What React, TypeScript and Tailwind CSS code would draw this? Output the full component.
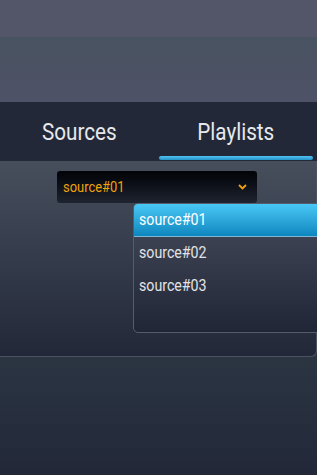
import React from "react";

const items = ["source#01", "source#02", "source#03"];

function Condensed({ children, left }: { children: React.ReactNode; left?: boolean }) {
  // Roboto Condensed isn't installed, so squeeze Roboto a little
  return (
    <span className={left ? "inline-block origin-left scale-x-[0.86]" : "inline-block scale-x-[0.86]"}>
      {children}
    </span>
  );
}

export default function App() {
  return (
    <div className="w-[317px] h-[475px] overflow-hidden flex flex-col bg-[#2b3542] font-['Roboto',sans-serif]">
      {/* Top header */}
      <div className="h-[37px] bg-[#535669]" />
      <div className="h-[65px] bg-gradient-to-b from-[#485361] to-[#4f5267]" />

      {/* Tabs */}
      <div className="h-[59px] bg-[#222838] grid grid-cols-2">
        <div className="relative flex items-center justify-center text-[24px] text-[#e6e8eb] leading-none">
          <Condensed>Sources</Condensed>
        </div>
        <div className="relative flex items-center justify-center text-[24px] text-[#e6e8eb] leading-none pr-1">
          <Condensed>Playlists</Condensed>
          <div className="absolute left-0 right-1 bottom-[1px] h-[4px] rounded-full bg-gradient-to-b from-[#52c4f2] to-[#2393c9]" />
        </div>
      </div>

      {/* Panel */}
      <div className="relative h-[196px] bg-gradient-to-b from-[#474f5d] to-[#222838] border-b border-r border-[#4b5263] rounded-br-[6px]">
        <div className="ml-[57px] mt-[10px] w-[200px] h-[32px] rounded-[3px] bg-gradient-to-b from-[#030407] to-[#1f2431] flex items-center justify-between pl-[6px] pr-[10px] text-[15px] text-[#f2a30c]">
          <Condensed left>source#01</Condensed>
          <svg width="9" height="6" viewBox="0 0 9 6" fill="none">
            <polyline points="1,1 4.5,4.5 8,1" stroke="#f2a30c" strokeWidth="1.8" />
          </svg>
        </div>

        {/* Dropdown list */}
        <div className="absolute left-[133px] top-[42px] w-[190px] h-[130px] rounded-[5px] border border-[#555c6c] bg-gradient-to-b from-[#474c5c] to-[#212636] overflow-hidden">
          {items.map((item, i) => (
            <div
              key={item}
              className={
                i === 0
                  ? "h-[33px] flex items-center pl-[5px] text-[16.5px] text-white bg-gradient-to-b from-[#48c8f6] to-[#0a87bf] border-b border-[#7fb6d4]"
                  : "h-[33px] flex items-center pl-[5px] text-[16.5px] text-[#e2e3e6]"
              }
            >
              <Condensed left>{item}</Condensed>
            </div>
          ))}
        </div>
      </div>

      {/* Bottom */}
      <div className="flex-1 bg-gradient-to-b from-[#2b3542] to-[#222838]" />
    </div>
  );
}
